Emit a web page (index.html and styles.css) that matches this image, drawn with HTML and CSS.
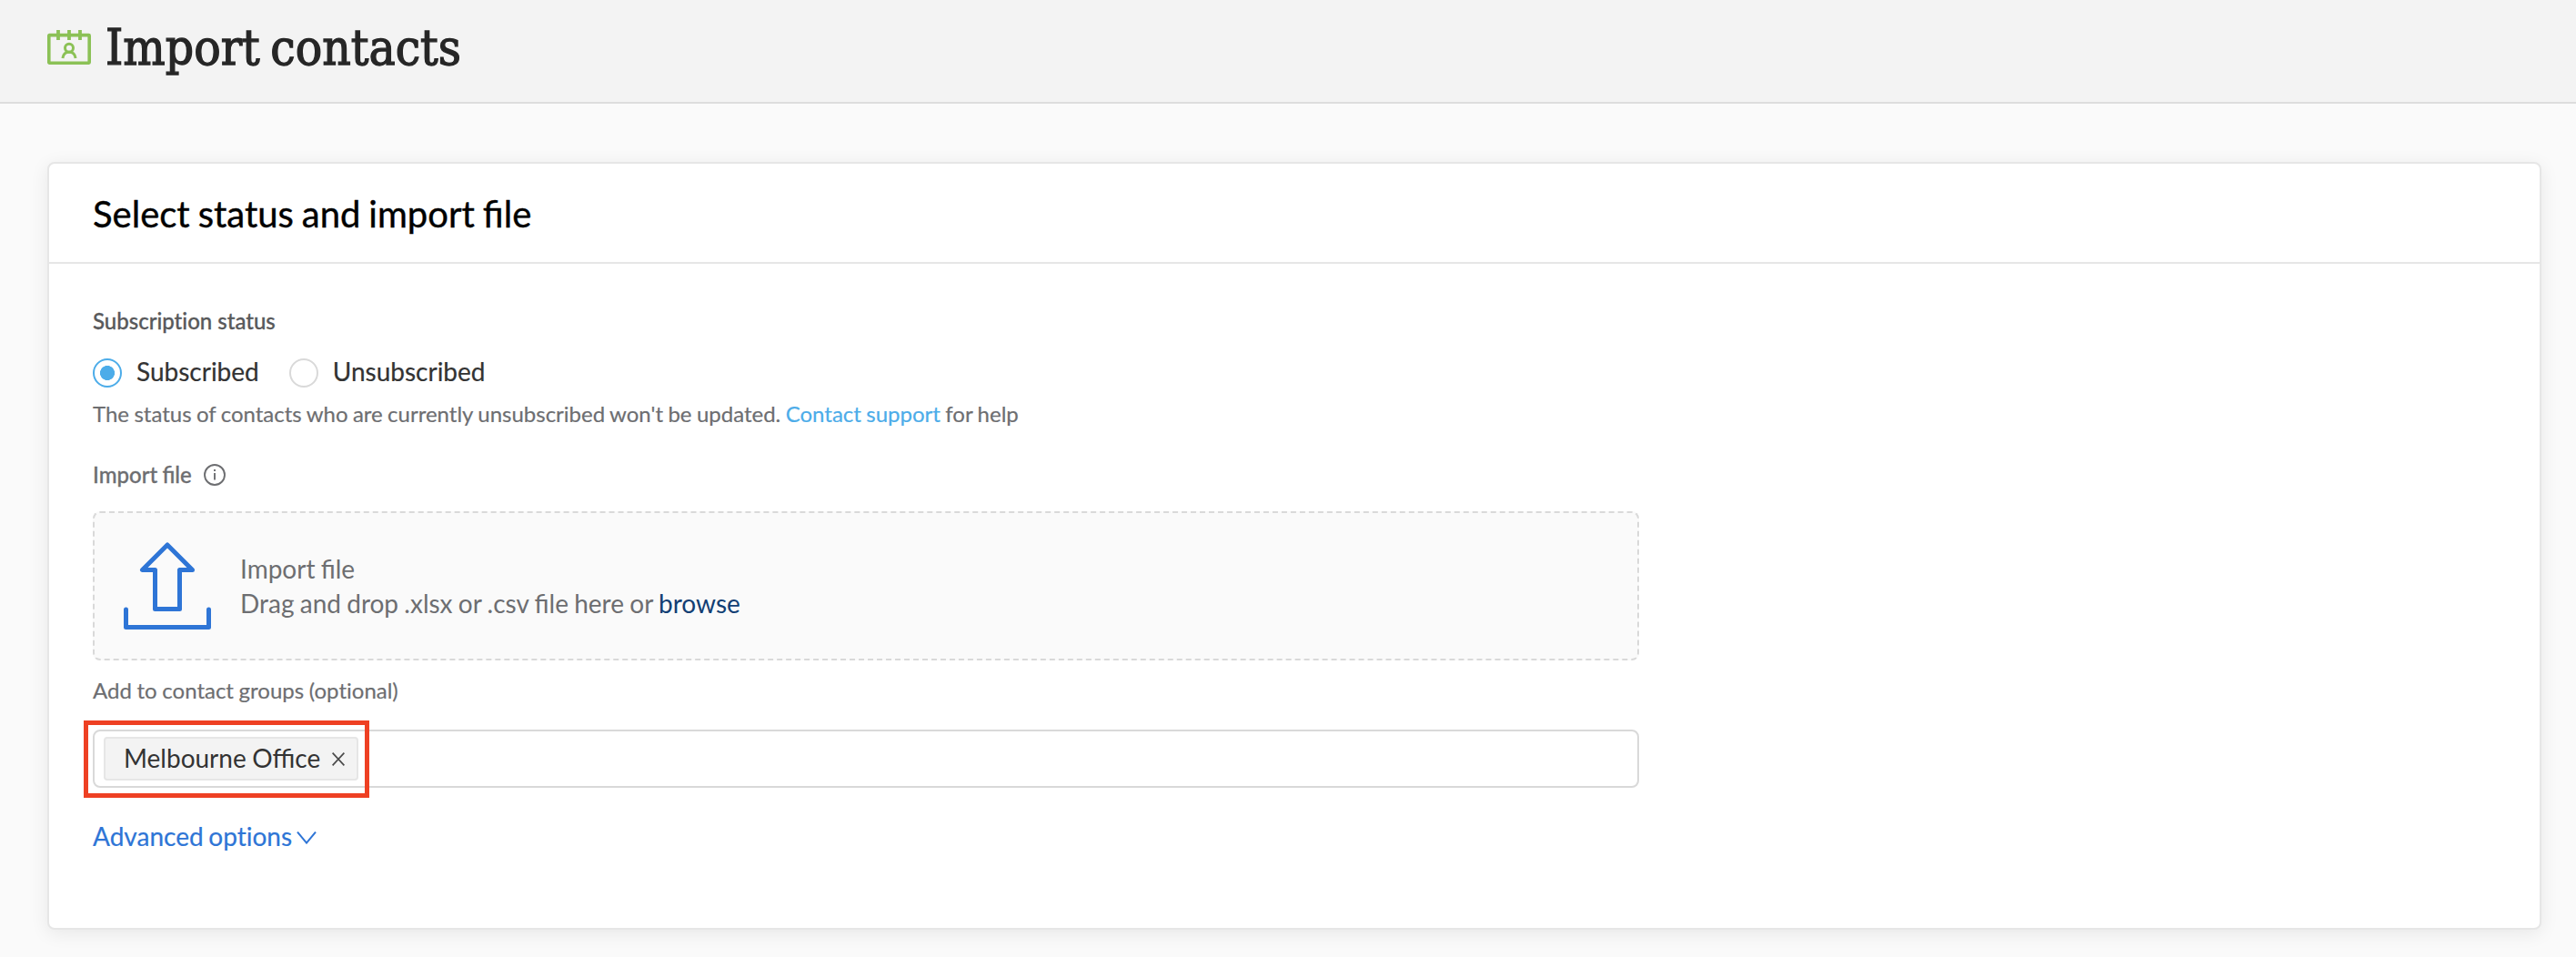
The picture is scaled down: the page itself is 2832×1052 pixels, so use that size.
FILE: index.html
```html
<!DOCTYPE html>
<html lang="en">
<head>
<meta charset="utf-8">
<title>Import contacts</title>
<link rel="stylesheet" href="styles.css">
</head>
<body>
<header class="page-header">
  <svg class="header-icon" viewBox="0 0 48 38" width="48" height="38" fill="none" stroke="#8bc156">
    <rect x="1.8" y="5.6" width="44.4" height="30.600" rx=".6" stroke-width="3.600"/>
    <path d="M12 0v11M24 0v11M36 0v11" stroke-width="3.800"/>
    <circle cx="24" cy="19.800" r="4.500" stroke-width="3"/>
    <path d="M16.900 31c.7-4.600 3.200-6.700 7.100-6.700s6.400 2.100 7.100 6.700" stroke-width="3"/>
  </svg>
  <h1 class="page-title">Import contacts</h1>
</header>
<main class="card">
  <h2 class="card-title">Select status and import file</h2>
  <div class="card-body">
    <div class="label label-dark">Subscription status</div>
    <div class="radios">
      <label class="radio"><span class="dot dot-on"></span><span class="radio-text">Subscribed</span></label>
      <label class="radio"><span class="dot"></span><span class="radio-text">Unsubscribed</span></label>
    </div>
    <p class="hint">The status of contacts who are currently unsubscribed won't be updated. <a class="support">Contact support</a> for help</p>
    <div class="label file-label">Import file
      <svg width="24" height="24" viewBox="0 0 24 24" fill="none" stroke="#6d6e71"><circle cx="12" cy="12" r="11" stroke-width="1.900"/><path d="M12 10v7.500M12 6v2" stroke-width="1.900"/></svg>
    </div>
    <div class="dropzone">
      <svg width="96" height="96" viewBox="0 0 96 96" fill="none" stroke="#2e75d6" stroke-width="5" stroke-linejoin="round" stroke-linecap="round">
        <path d="M48 3L20.500 30.500H34.500V73.500H61.500V30.500H75.500Z"/><path d="M2.500 74V93.500H93.500V74"/>
      </svg>
      <div class="drop-text">Import file<br>Drag and drop .xlsx or .csv file here or <a class="browse">browse</a></div>
    </div>
    <div class="hint group-label">Add to contact groups (optional)</div>
    <div class="group-input">
      <span class="tag">Melbourne Office
        <svg class="tag-close" width="14" height="15" viewBox="0 0 14 15" fill="none" stroke="#4a4a4a" stroke-width="1.700"><path d="M.6 .6L13.400 14.400M13.400 .6L.6 14.400"/></svg>
      </span>
      <span class="highlight"></span>
    </div>
    <a class="advanced">Advanced options
      <svg class="chevron" width="22" height="14" viewBox="0 0 22 14" fill="none" stroke="#2e75d6" stroke-width="2"><path d="M1 .6L11 12.600L21 .6"/></svg>
    </a>
  </div>
</main>
</body>
</html>
```
FILE: styles.css
```css
* { box-sizing: border-box; }
body { margin: 0; background: #fafafa; font-family: Lato, sans-serif; color: #333; height: 1052px; overflow: hidden; }
.page-header { height: 114px; background: #f3f3f3; border-bottom: 2px solid #ddd; padding: 0 52px; display: flex; align-items: center; gap: 16px; }
.header-icon { flex: none; margin-bottom: 8px; }
.page-title { margin: 0 0 8px; font: 400 55px/70px "Roboto Slab", "DejaVu Serif Condensed", "DejaVu Serif", serif; color: #262626; white-space: nowrap; word-spacing: -4px; transform: scaleX(.99); transform-origin: left; -webkit-text-stroke: 1.300px #262626; }
.card { margin: 64px 38px 0 52px; height: 844px; background: #fff; border: 2px solid #e6e6e6; border-radius: 8px; box-shadow: 0 4px 20px rgba(0,0,0,.08); word-spacing: -.75px; }
.card-title { margin: 0; height: 110px; border-bottom: 2px solid #e6e6e6; padding-left: 48px; font-size: 40px; line-height: 110px; font-weight: 400; color: #000; word-spacing: -1.300px; -webkit-text-stroke: .4px #000; }
.card-body { padding: 47px 48px 0; }
.label { font-size: 24px; line-height: 32px; font-weight: 500; color: #6d6e71; -webkit-text-stroke: .3px currentColor; }
.label-dark { color: #58595b; font-variant-ligatures: none; word-spacing: 0; }
.radios { display: flex; gap: 33px; height: 32px; margin-top: 25px; }
.radio { display: flex; align-items: center; gap: 16px; font-size: 28px; line-height: 32px; -webkit-text-stroke: .2px currentColor; }
.radio-text { margin-top: -5px; }
.dot { width: 32px; height: 32px; border: 2px solid #d9d9d9; border-radius: 50%; }
.dot-on { border-color: #4cace9; background: radial-gradient(circle, #4cace9 7.700px, #fff 8.300px); }
.hint { margin: 13px 0 0; font-size: 24px; line-height: 32px; color: #6d6e71; -webkit-text-stroke: .2px currentColor; }
.support { color: #4cace9; }
.file-label { margin-top: 35px; display: flex; align-items: center; gap: 13px; }
.dropzone { margin-top: 24px; width: 1700px; height: 164px; border: 2px dashed #d9d9d9; border-radius: 8px; background: #fafafa; display: flex; align-items: center; gap: 32px; padding-left: 32px; }
.drop-text { font-size: 28px; line-height: 38px; color: #6d6e71; word-spacing: -.9px; }
.browse { color: #123f74; }
.group-label { margin-top: 17px; font-variant-ligatures: none; word-spacing: -.5px; }
.group-input { position: relative; margin-top: 27px; width: 1700px; height: 64px; border: 2px solid #d9d9d9; border-radius: 8px; padding: 6px 10px; }
.tag { display: flex; align-items: center; height: 48px; width: 280px; padding: 0 13px 2px 20px; border: 2px solid #e6e6e6; border-radius: 4px; background: #f3f3f3; font-size: 28px; line-height: 42px; white-space: nowrap; }
.tag-close { margin: 2px 0 0 auto; }
.highlight { position: absolute; left: -12px; top: -12px; width: 314px; height: 85px; border: 5px solid #ee4023; }
.advanced { display: flex; align-items: center; gap: 5px; margin-top: 36px; font-size: 28px; line-height: 34px; color: #2e75d6; font-variant-ligatures: none; -webkit-text-stroke: .2px currentColor; word-spacing: -1.500px; }
.chevron { margin-top: 4px; }
```
